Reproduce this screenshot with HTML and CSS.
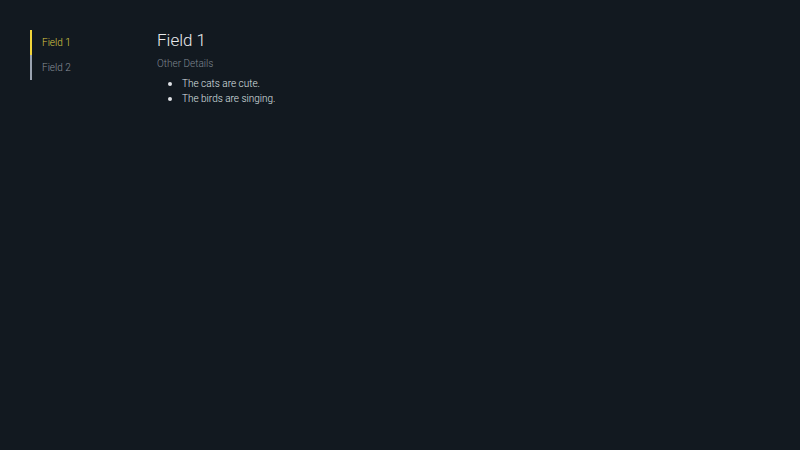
FILE: index.html
```html
<!DOCTYPE html>
<html lang="en">

<head>
    <meta charset="UTF-8">
    <meta name="viewport" content="width=device-width, initial-scale=1.0">
    <title>Fields</title>
    <link rel="stylesheet" href="styles.css">
</head>

<body>
    <div class="layout">
        <nav class="tabs">
            <div class="tab active">Field 1</div>
            <div class="tab">Field 2</div>
        </nav>
        <main class="panel">
            <h1>Field 1</h1>
            <div class="subtitle">Other Details</div>
            <ul class="details">
                <li>The cats are cute.</li>
                <li>The birds are singing.</li>
            </ul>
        </main>
    </div>
</body>

</html>
```

FILE: styles.css
```css
* {
    margin: 0;
    padding: 0;
    box-sizing: border-box;
}

body {
    font-family: 'Roboto', sans-serif;
    font-weight: 300;
    background-color: #121920;
    color: #e6e8ea;
    min-height: 100vh;
}

.layout {
    display: flex;
    padding: 30px 30px;
}

.tabs {
    width: 127px;
    display: flex;
    flex-direction: column;
}

.tab {
    font-size: 10px;
    line-height: 25px;
    padding-left: 10px;
    color: #8b929b;
    border-left: 2px solid #9aa3b0;
}

.tab.active {
    color: #dccb45;
    border-left-color: #f2d43a;
}

.panel {
    flex: 1;
}

h1 {
    font-size: 17px;
    font-weight: 300;
    line-height: 20px;
    color: #e8eaec;
}

.subtitle {
    font-size: 10px;
    line-height: 13px;
    color: #7f8791;
    margin-top: 7px;
}

.details {
    margin-top: 6px;
    padding-left: 25px;
    font-size: 10px;
    line-height: 15px;
    color: #dfe2e5;
}

.details li::marker {
    font-size: 12px;
}
```
